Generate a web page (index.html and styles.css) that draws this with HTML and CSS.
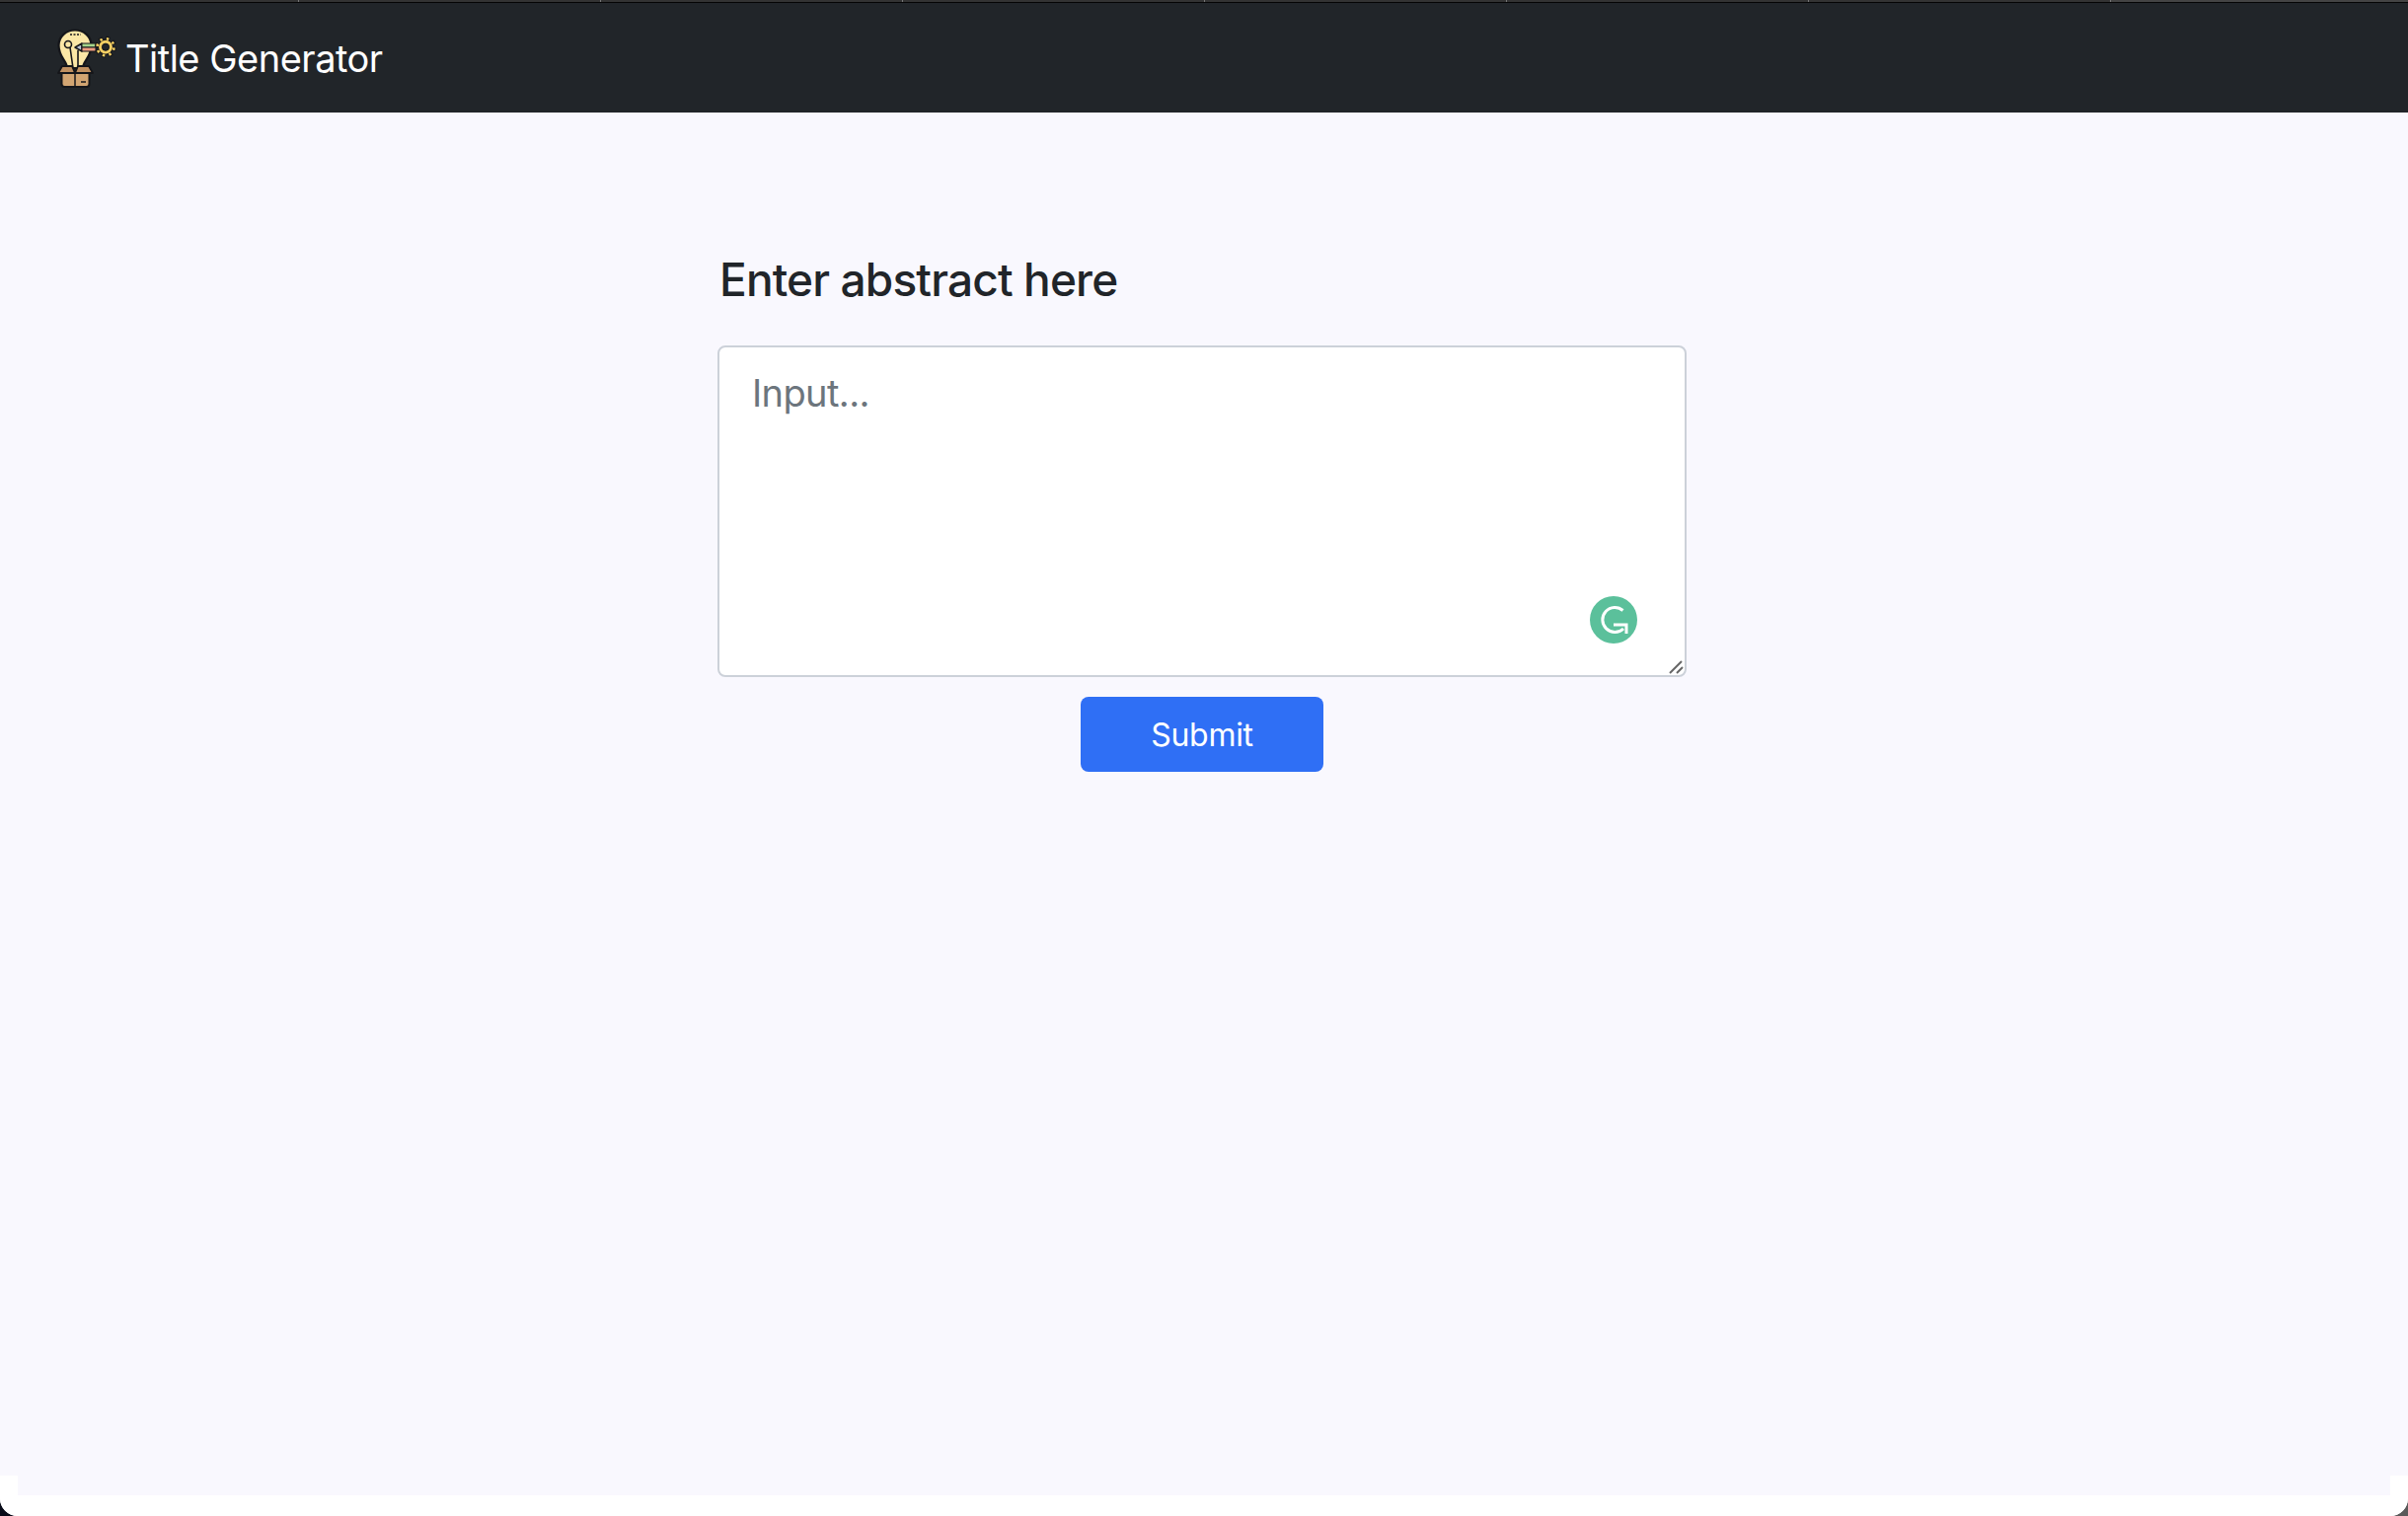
FILE: index.html
```html
<html>
<head>
  <title>Title Generator</title>
  <meta name="viewport" content="width=device-width, initial-scale=1.0">
  <link rel="stylesheet" href="styles.css">
</head>
<body>
  <div class="frame">
    <div class="tab-strip">
      <div class="tab"></div>
      <div class="tab"></div>
      <div class="tab"></div>
      <div class="tab"></div>
      <div class="tab"></div>
      <div class="tab"></div>
      <div class="tab"></div>
      <div class="tab tab-active"></div>
    </div>
    <nav class="navbar">
      <svg class="brand-logo" viewBox="0 0 60 60" width="60" height="60">
        <!-- bulb -->
        <path d="M10 40 C10 33 1.500 29 1.500 17 C1.500 8 9 1.500 18 1.500 C27 1.500 34.500 8 34.500 17 C34.500 29 26 33 26 40 Z" fill="#fbe7a6" stroke="#15161a" stroke-width="2.200"/>
        <path d="M13 6 h11" stroke="#15161a" stroke-width="1.500" stroke-dasharray="2 1.500"/>
        <circle cx="11" cy="16" r="3.500" fill="#fbe7a6" stroke="#15161a" stroke-width="1.600"/>
        <path d="M13 19 L16 40 M21 22 L21 40" fill="none" stroke="#15161a" stroke-width="1.600"/>
        <!-- pencil -->
        <path d="M18 19 L25 15 L25 23 Z" fill="#b9c2d0" stroke="#15161a" stroke-width="1.500" stroke-linejoin="round"/>
        <rect x="25" y="15" width="14" height="4" fill="#a5d58b" stroke="#15161a" stroke-width="1"/>
        <rect x="25" y="19" width="14" height="4" fill="#ee9c80" stroke="#15161a" stroke-width="1"/>
        <!-- gear -->
        <circle cx="49" cy="18.700" r="8.500" fill="none" stroke="#15161a" stroke-width="5" stroke-dasharray="3.700 2.980"/>
        <circle cx="49" cy="18.700" r="7.500" fill="#f4cf63" stroke="#15161a" stroke-width="1.200"/>
        <circle cx="49" cy="18.700" r="8.500" fill="none" stroke="#f4cf63" stroke-width="2.600" stroke-dasharray="2.400 4.280" stroke-dashoffset="-0.650"/>
        <circle cx="49" cy="18.700" r="3.600" fill="#212529" stroke="#15161a" stroke-width="1"/>
        <!-- box -->
        <path d="M4.500 45 H32.500 V56 Q32.500 59 29.500 59 H7.500 Q4.500 59 4.500 56 Z" fill="#d2a572" stroke="#15161a" stroke-width="2"/>
        <path d="M18 45 V59" stroke="#15161a" stroke-width="1.500"/>
        <path d="M24 54 h5" stroke="#15161a" stroke-width="1.500"/>
        <path d="M5 38 H15 L18 45 H1 Z" fill="#c09060" stroke="#15161a" stroke-width="1.800" stroke-linejoin="round"/>
        <path d="M21 38 H32 L36 45 H18 Z" fill="#c09060" stroke="#15161a" stroke-width="1.800" stroke-linejoin="round"/>
      </svg>
      <span class="brand-name">Title Generator</span>
    </nav>
    <main class="content">
      <form class="abstract-form">
        <h2 class="form-title">Enter abstract here</h2>
        <div class="input-wrap">
          <textarea class="abstract-input" placeholder="Input..."></textarea>
          <svg class="grammarly" viewBox="0 0 48 48" width="48" height="48">
            <circle cx="24" cy="24" r="24" fill="#5bc09b"/>
            <path d="M33.500 14.500 A12.500 12.500 0 1 0 34 33" fill="none" stroke="#fff" stroke-width="3"/>
            <path d="M24 29 H37 V38" fill="none" stroke="#fff" stroke-width="3"/>
          </svg>
          <svg class="resize-grip" viewBox="0 0 16 16" width="16" height="16">
            <path d="M1 14 L13 2 M8 14 L14 8" stroke="#666" stroke-width="2"/>
          </svg>
        </div>
        <button class="submit-btn" type="button">Submit</button>
      </form>
    </main>
    <div class="content-tail"></div>
    <div class="window-edge"></div>
  </div>
</body>
</html>
```

FILE: styles.css
```css
html {
  background: linear-gradient(90deg, #080b18 50%, #5a5a5a 50%);
}
body {
  margin: 0;
  font-family: Inter, "Liberation Sans", sans-serif;
  color: #212529;
}
.frame {
  display: flex;
  flex-direction: column;
  height: 1536px;
  background: #fff;
  border-radius: 0 0 18px 18px;
  overflow: hidden;
}
.tab-strip {
  display: flex;
  height: 2px;
  border-bottom: 1px solid #050505;
  background: #333;
}
.tab {
  width: 305px;
  border-right: 1px solid #777;
}
.tab:first-child {
  width: 302px;
}
.tab-active {
  flex: 1;
  border-right: none;
  background: #444;
}
.navbar {
  display: flex;
  align-items: center;
  height: 111px;
  padding-left: 58px;
  background: #212529;
}
.brand-logo {
  margin-right: 9px;
}
.brand-name {
  color: #fff;
  font-size: 38px;
  letter-spacing: -0.5px;
}
.content {
  flex: 1;
  display: flex;
  justify-content: center;
  padding-right: 4px;
  background: #f9f8fe;
}
.abstract-form {
  display: flex;
  flex-direction: column;
  align-items: center;
  width: 982px;
  padding-top: 142px;
}
.form-title {
  align-self: flex-start;
  margin: 0 0 39px 2px;
  font-size: 46px;
  font-weight: 500;
  line-height: 1.2;
  letter-spacing: -0.85px;
}
.input-wrap {
  position: relative;
  width: 100%;
  height: 336px;
}
.abstract-input {
  display: block;
  box-sizing: border-box;
  width: 100%;
  height: 100%;
  padding: 24px 33px;
  border: 2px solid #ccd1d9;
  border-radius: 8px;
  background: #fff;
  font-family: inherit;
  font-size: 38px;
  line-height: 1.2;
  letter-spacing: -0.6px;
  color: #212529;
  resize: none;
}
.abstract-input::placeholder {
  color: #6c757d;
  opacity: 1;
}
.grammarly {
  position: absolute;
  right: 50px;
  bottom: 34px;
}
.resize-grip {
  position: absolute;
  right: 2px;
  bottom: 2px;
}
.submit-btn {
  width: 246px;
  height: 76px;
  margin-top: 20px;
  border: none;
  border-radius: 8px;
  background: #2f6ff5;
  color: #fff;
  font-family: inherit;
  font-size: 32px;
  letter-spacing: -0.3px;
}
.content-tail {
  height: 20px;
  margin: 0 18px;
  background: #f9f8fe;
}
.window-edge {
  height: 21px;
  background: #fff;
}
```
